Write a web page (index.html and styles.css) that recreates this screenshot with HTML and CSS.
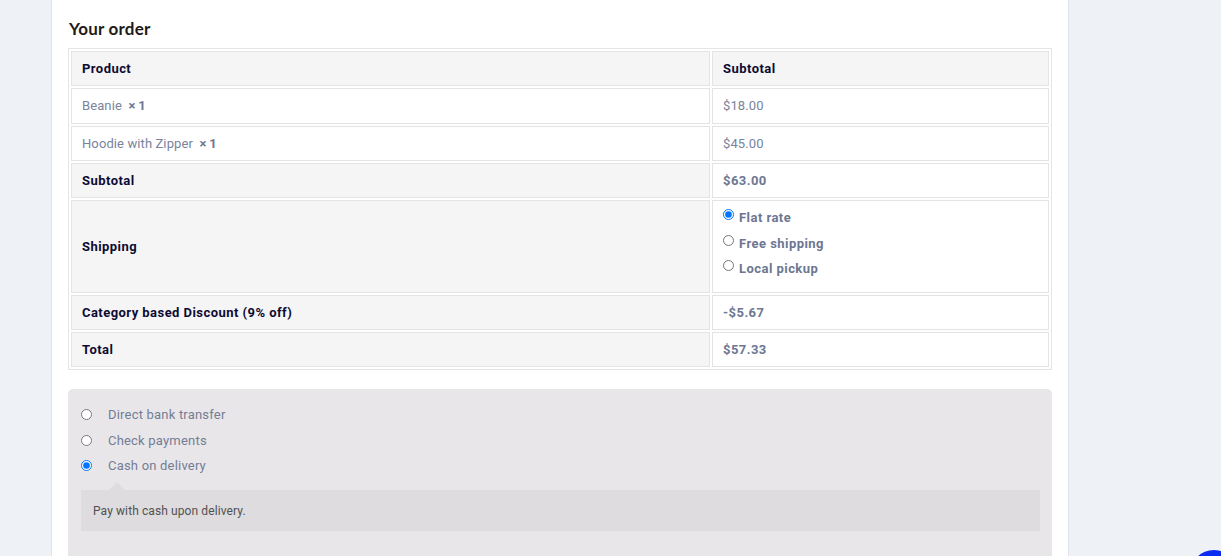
FILE: index.html
```html
<!DOCTYPE html>
<html lang="en">
<head>
<meta charset="utf-8">
<title>Checkout</title>
<link rel="stylesheet" href="styles.css">
</head>
<body>
<div class="page">
  <main class="panel">
    <h3 class="order-title">Your order</h3>
    <table class="order-table">
      <thead>
        <tr>
          <th class="col-name">Product</th>
          <th>Subtotal</th>
        </tr>
      </thead>
      <tbody>
        <tr class="item">
          <td>Beanie&nbsp; <strong class="qty">×&thinsp;1</strong></td>
          <td>$18.00</td>
        </tr>
        <tr class="item">
          <td>Hoodie with Zipper&nbsp; <strong class="qty">×&thinsp;1</strong></td>
          <td>$45.00</td>
        </tr>
      </tbody>
      <tfoot>
        <tr>
          <th>Subtotal</th>
          <td class="amount">$63.00</td>
        </tr>
        <tr class="shipping">
          <th>Shipping</th>
          <td>
            <ul class="ship-list">
              <li><label><input type="radio" name="ship" checked> Flat rate</label></li>
              <li><label><input type="radio" name="ship"> Free shipping</label></li>
              <li><label><input type="radio" name="ship"> Local pickup</label></li>
            </ul>
          </td>
        </tr>
        <tr>
          <th>Category based Discount (9% off)</th>
          <td class="amount">-$5.67</td>
        </tr>
        <tr>
          <th>Total</th>
          <td class="amount">$57.33</td>
        </tr>
      </tfoot>
    </table>

    <div class="payment">
      <ul class="pay-list">
        <li><label><input type="radio" name="pay"> <span>Direct bank transfer</span></label></li>
        <li><label><input type="radio" name="pay"> <span>Check payments</span></label></li>
        <li><label><input type="radio" name="pay" checked> <span>Cash on delivery</span></label></li>
      </ul>
      <div class="pay-box">Pay with cash upon delivery.</div>
    </div>
  </main>
</div>
<div class="chat-bubble"></div>
</body>
</html>
```

FILE: styles.css
```css
html, body {
  margin: 0;
  padding: 0;
}
body {
  background: #eef1f6;
  font-family: "Roboto", "Liberation Sans", sans-serif;
  font-size: 13px;
  color: #737d96;
  height: 556px;
  overflow: hidden;
}
.page {
  padding-left: 51px;
}
.panel {
  width: 984px;
  min-height: 600px;
  background: #fff;
  border-left: 1px solid #e2e5eb;
  border-right: 1px solid #e2e5eb;
  padding: 18px 16px 0 16px;
}
.order-title {
  margin: 0 0 8px 1px;
  font-family: "Lato", "Liberation Sans", sans-serif;
  font-weight: 700;
  font-size: 17px;
  line-height: 22px;
  color: #1f1a17;
  letter-spacing: 0.2px;
}
.order-table {
  width: 984px;
  border: 1px solid #e5e5e5;
  border-collapse: separate;
  border-spacing: 2px;
  table-layout: fixed;
}
.col-name {
  width: 617px;
}
.order-table th,
.order-table td {
  border: 1px solid #e4e4e4;
  padding: 7px 10px;
  line-height: 19.3px;
  text-align: left;
  vertical-align: middle;
}
.order-table th {
  background: #f5f5f5;
  color: #0d0b33;
  font-weight: 700;
  letter-spacing: 0.45px;
}
.order-table td {
  background: #fff;
  color: #7a839b;
  letter-spacing: 0.1px;
}
.order-table .qty {
  color: #6d7791;
  font-weight: 700;
}
.order-table .amount {
  font-weight: 700;
  color: #6d7791;
  letter-spacing: 0.45px;
}
.shipping td {
  padding: 7px 10px 7px 10px;
}
.ship-list {
  list-style: none;
  margin: 0;
  padding: 0;
}
.ship-list li {
  height: 25.5px;
  line-height: 19px;
}
.ship-list label {
  font-weight: 700;
  color: #6d7791;
  letter-spacing: 0.45px;
  display: flex;
  align-items: center;
  gap: 3px;
}
.ship-list input {
  margin: 0 2px 0 0;
  width: 11px;
  height: 11px;
  position: relative;
  top: -3px;
}
.payment {
  margin-top: 19px;
  background: #e9e6e9;
  border-radius: 5px 5px 0 0;
  padding: 16px 12px 30px 13px;
}
.pay-list {
  list-style: none;
  margin: 0;
  padding: 0;
}
.pay-list li {
  height: 25.5px;
  line-height: 19px;
}
.pay-list label {
  display: flex;
  align-items: center;
  color: #737d96;
  letter-spacing: 0.2px;
}
.pay-list input {
  margin: 0 16px 0 0;
  width: 11px;
  height: 11px;
}
.pay-box {
  position: relative;
  margin-top: 8px;
  background: #dedcde;
  padding: 12px 12px 10px 12px;
  line-height: 19px;
  font-size: 12px;
  color: #515151;
  letter-spacing: 0.1px;
}
.pay-box::before {
  content: "";
  position: absolute;
  top: -8px;
  left: 28px;
  border-left: 8px solid transparent;
  border-right: 8px solid transparent;
  border-bottom: 8px solid #dedcde;
}
.chat-bubble {
  position: fixed;
  left: 1190px;
  top: 550px;
  width: 48px;
  height: 48px;
  border-radius: 50%;
  background: #0a2cf0;
}
```
